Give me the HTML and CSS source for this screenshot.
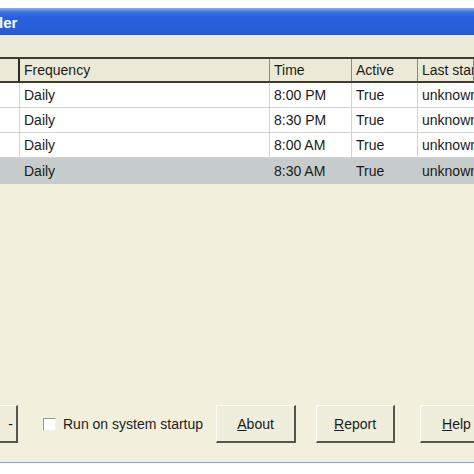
FILE: index.html
```html
<!DOCTYPE html>
<html>
<head>
<meta charset="utf-8">
<link rel="stylesheet" href="styles.css">
</head>
<body>
<div class="window">
  <div class="top-white"></div>
  <div class="titlebar"><span class="title">ler</span></div>
  <div class="toolbar"></div>
  <div class="grid">
    <div class="row head">
      <div class="c c0"></div>
      <div class="c c1">Frequency</div>
      <div class="c c2">Time</div>
      <div class="c c3">Active</div>
      <div class="c c4">Last start</div>
    </div>
    <div class="row">
      <div class="c c0"></div>
      <div class="c c1">Daily</div>
      <div class="c c2">8:00 PM</div>
      <div class="c c3">True</div>
      <div class="c c4">unknown</div>
    </div>
    <div class="row">
      <div class="c c0"></div>
      <div class="c c1">Daily</div>
      <div class="c c2">8:30 PM</div>
      <div class="c c3">True</div>
      <div class="c c4">unknown</div>
    </div>
    <div class="row">
      <div class="c c0"></div>
      <div class="c c1">Daily</div>
      <div class="c c2">8:00 AM</div>
      <div class="c c3">True</div>
      <div class="c c4">unknown</div>
    </div>
    <div class="row sel">
      <div class="c c0"></div>
      <div class="c c1">Daily</div>
      <div class="c c2">8:30 AM</div>
      <div class="c c3">True</div>
      <div class="c c4">unknown</div>
    </div>
  </div>
  <div class="spacer"></div>
  <div class="bottom">
    <div class="btn b0">-</div>
    <label class="chk"><span class="box"></span>Run on system startup</label>
    <div class="btn b1"><u>A</u>bout</div>
    <div class="btn b2"><u>R</u>eport</div>
    <div class="btn b3"><u>H</u>elp</div>
  </div>
  <div class="blueline"></div>
  <div class="bottom-white"></div>
</div>
</body>
</html>
```

FILE: styles.css
```css
html, body {
  margin: 0;
  padding: 0;
  width: 474px;
  height: 474px;
  overflow: hidden;
  background: #ffffff;
}
.window {
  display: flex;
  flex-direction: column;
  width: 474px;
  height: 474px;
  font-family: "Liberation Sans", Arial, sans-serif;
  font-size: 14px;
  color: #1a1a1a;
}
.top-white {
  height: 8px;
  background: #ffffff;
}
.titlebar {
  height: 27px;
  background: linear-gradient(#8fb2f0 0px, #3d72e6 4px, #2a60de 9px, #2a5ed8 22px, #2655c8 27px);
  display: flex;
  align-items: center;
}
.title {
  color: #ffffff;
  font-size: 15px;
  font-weight: bold;
  margin-left: -1px;
  margin-top: 2px;
}
.toolbar {
  height: 21px;
  background: #ecebd8;
  border-top: 1px solid #f6f5ea;
}
.grid {
  display: flex;
  flex-direction: column;
  background: #ffffff;
}
.row {
  display: flex;
  height: 24px;
  border-bottom: 1px solid #d3d3d0;
  background: #ffffff;
}
.row.head {
  height: 22px;
  background: #ecead6;
  border-top: 2px solid #3d3c36;
  border-bottom: 2px solid #3d3c36;
}
.row.sel {
  background: #c5cccb;
  border-bottom: none;
  height: 26px;
}
.c {
  display: flex;
  align-items: center;
  padding-left: 4px;
  box-sizing: border-box;
  border-right: 1px solid #d3d3d0;
  white-space: nowrap;
  overflow: hidden;
}
.head .c {
  border-right: 1px solid #8b8a80;
}
.head .c0 {
  border-right: 2px solid #2c2b26;
}
.sel .c {
  border-right: none;
}
.c0 { width: 20px; padding: 0; flex-shrink: 0; }
.c1 { width: 250px; flex-shrink: 0; }
.c2 { width: 82px; flex-shrink: 0; }
.c3 { width: 66px; flex-shrink: 0; }
.c4 { flex: 1; border-right: none; }
.spacer {
  flex: 1;
  background: #f2f0dc;
}
.bottom {
  height: 64px;
  background: #f2f0dc;
  display: flex;
  align-items: center;
}
.btn {
  flex-shrink: 0;
  height: 38px;
  box-sizing: border-box;
  background: #efeedc;
  border: 1px solid #b9b8a6;
  border-right: 2px solid #55544c;
  border-bottom: 2px solid #55544c;
  border-left-color: #fdfdf8;
  border-top-color: #fdfdf8;
  display: flex;
  align-items: center;
  justify-content: center;
  margin-top: -12px;
  white-space: nowrap;
}
.b0 {
  width: 18px;
  justify-content: flex-end;
  padding-right: 3px;
  border-left: none;
}
.b1 { width: 80px; margin-left: 13px; }
.b2 { width: 79px; margin-left: 20px; }
.b3 { width: 56px; margin-left: 25px; justify-content: flex-start; padding-left: 21px; border-right: none; overflow: hidden; }
.chk {
  flex-shrink: 0;
  display: flex;
  align-items: center;
  margin-left: 25px;
  margin-top: -12px;
  color: #222;
  white-space: nowrap;
}
.box {
  width: 11px;
  height: 11px;
  background: #ffffff;
  border-top: 1px solid #9a9a90;
  border-left: 1px solid #9a9a90;
  border-right: 1px solid #f4f3ea;
  border-bottom: 1px solid #f4f3ea;
  margin-right: 7px;
}
.blueline {
  height: 1px;
  background: #8ea4d8;
}
.bottom-white {
  height: 11px;
  background: #ffffff;
}
```
